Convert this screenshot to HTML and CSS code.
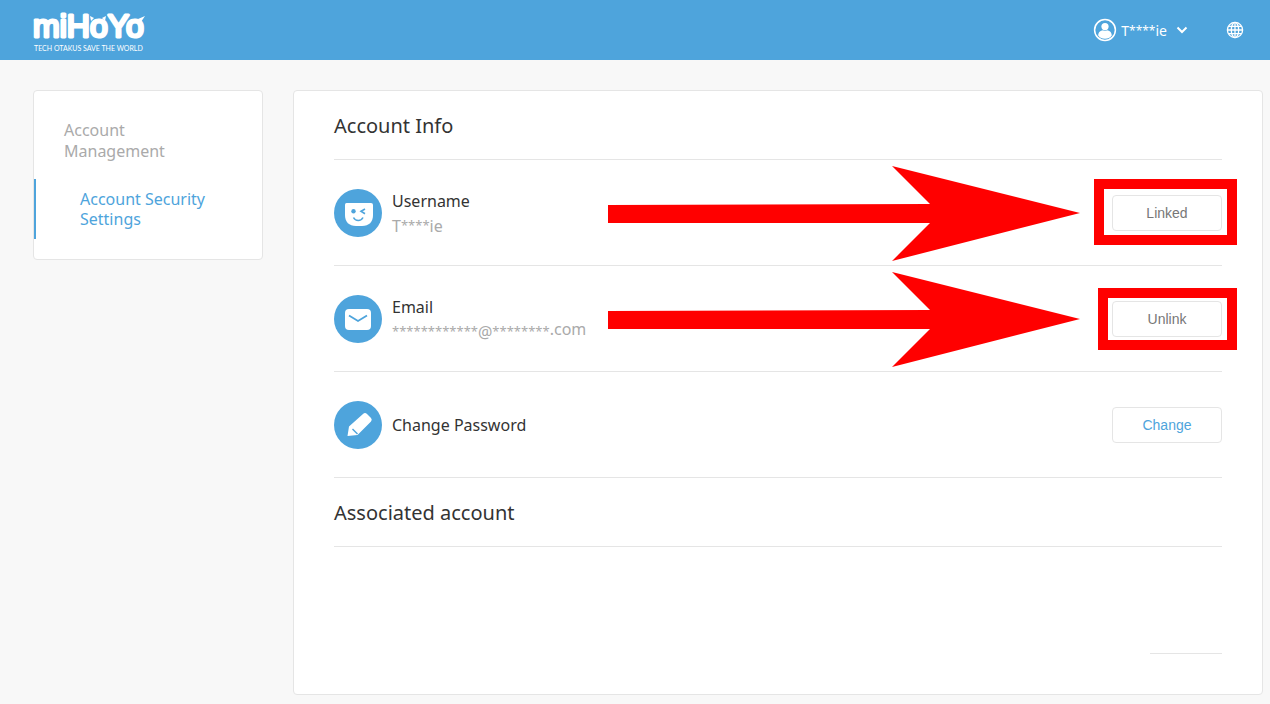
FILE: index.html
```html
<!DOCTYPE html>
<html lang="en">
<head>
  <meta charset="UTF-8" />
  <meta name="viewport" content="width=device-width, initial-scale=1.0"/>
  <title>miHoYo Account</title>
  <link rel="stylesheet" href="styles.css">
</head>
<body>
  <header class="header">
    <a class="logo" href="#">
      <svg width="120" height="46" viewBox="0 0 120 46" fill="#fff">
        <text class="logo-name" x="1" y="30">miHoYo</text>
        <path d="M58 9l4 2-3 3zM74 9l-4 2 3 3zM106 12l7-3-4 6z"/>
        <text class="logo-slogan" x="2" y="44">TECH OTAKUS SAVE THE WORLD</text>
      </svg>
    </a>
    <div class="header-right">
      <button class="user-menu" type="button">
        <svg width="24" height="24" viewBox="0 0 24 24" fill="#fff">
          <circle cx="12" cy="12" r="10.4" fill="none" stroke="#fff" stroke-width="1.5"/>
          <circle cx="12" cy="8.6" r="3.6"/>
          <path d="M5.2 17.5c0-3 2.2-5 4.8-5.2 1.200.7 2.800.7 4 0 2.600.2 4.800 2.200 4.800 5.200-1.600 2.200-4 3.300-6.800 3.300s-5.200-1.100-6.800-3.300z"/>
        </svg>
        <span>T<span class="stars">****</span>ie</span>
        <svg class="arrow-down" width="12" height="8" viewBox="0 0 12 8" fill="none" stroke="#fff" stroke-width="2">
          <path d="M1.500 1.500L6 6l4.500-4.500"/>
        </svg>
      </button>
      <button class="lang" type="button" aria-label="Language">
        <svg width="18" height="18" viewBox="0 0 18 18" fill="none" stroke="#fff" stroke-width="1.300">
          <circle cx="9" cy="9" r="7.600"/>
          <ellipse cx="9" cy="9" rx="3.700" ry="7.600"/>
          <path d="M9 1.400v15.200M1.400 9h15.200M2.500 5.300h13M2.500 12.700h13"/>
        </svg>
      </button>
    </div>
  </header>

  <div class="container">
    <nav class="sidebar">
      <div class="menu-title">Account Management</div>
      <a class="menu-item active" href="#">Account Security Settings</a>
    </nav>

    <main class="content">
      <h2 class="title">Account Info</h2>
      <ul class="list">
        <li class="row">
          <svg class="icon" width="48" height="48" viewBox="0 0 48 48">
            <circle cx="24" cy="24" r="24" fill="#4ea4dc"/>
            <path d="M12.500 14h24.500a2 2 0 0 1 2 2v10c0 7-4 11-11 11h-6c-7 0-11-4-11-11v-10.500a1.500 1.500 0 0 1 1.500-1.500z" fill="#fff"/>
            <circle cx="19.500" cy="22.300" r="2.200" fill="#4ea4dc"/>
            <path d="M31 20l-4 2.300 4 2.500M19.500 28.500c2 4 7.500 4 9.500 0" fill="none" stroke="#4ea4dc" stroke-width="1.600"/>
          </svg>
          <div class="info">
            <div class="name">Username</div>
            <div class="value">T<span class="stars">****</span>ie</div>
          </div>
          <svg class="arrow" width="472" height="95" viewBox="0 0 472 95" fill="#f00">
            <path d="M0 39L322 38 284 0 472 47 284 95 322 57H0z"/>
          </svg>
          <div class="action mark mark-linked"><button class="btn" type="button">Linked</button></div>
        </li>
        <li class="row">
          <svg class="icon" width="48" height="48" viewBox="0 0 48 48">
            <circle cx="24" cy="24" r="24" fill="#4ea4dc"/>
            <rect x="11" y="14" width="26" height="21" rx="4" fill="#fff"/>
            <path d="M15 20.500l9 5.500 9-5.500" fill="none" stroke="#4ea4dc" stroke-width="1.800"/>
          </svg>
          <div class="info">
            <div class="name">Email</div>
            <div class="value"><span class="stars">************</span>@<span class="stars">********</span><span class="domain">.com</span></div>
          </div>
          <svg class="arrow" width="472" height="95" viewBox="0 0 472 95" fill="#f00">
            <path d="M0 39L322 38 284 0 472 47 284 95 322 57H0z"/>
          </svg>
          <div class="action mark mark-unlink"><button class="btn" type="button">Unlink</button></div>
        </li>
        <li class="row">
          <svg class="icon" width="48" height="48" viewBox="0 0 48 48">
            <circle cx="24" cy="24" r="24" fill="#4ea4dc"/>
            <path d="M13.500 35l1.500-9.500 14-12.500q2-2 4 0l4 4q1.500 1.500 0 3.500L23.500 34z" fill="#fff"/>
            <path d="M18.500 28l5 5" stroke="#4ea4dc" stroke-width="1.400"/>
          </svg>
          <div class="info">
            <div class="name">Change Password</div>
          </div>
          <div class="action"><button class="btn btn-blue" type="button">Change</button></div>
        </li>
      </ul>
      <h2 class="title">Associated account</h2>
      <div class="short-line"></div>
    </main>
  </div>
</body>
</html>
```

FILE: styles.css
```css
* {
  box-sizing: border-box;
}
body {
  font-family: "Noto Sans", "Open Sans", sans-serif;
  font-size: 16px;
  margin: 0;
  background: #f8f8f8;
  color: #333;
}
button {
  cursor: pointer;
}
.header {
  display: flex;
  justify-content: space-between;
  align-items: center;
  height: 60px;
  padding: 0 26px 0 32px;
  background: #4ea4dc;
}
.logo svg {
  display: block;
}
.logo-name {
  font-family: "Liberation Sans", Arial, sans-serif;
  font-size: 32px;
  stroke: #fff;
  stroke-width: 3px;
  stroke-linejoin: round;
}
.logo-slogan {
  font-family: Lato, sans-serif;
  font-size: 7px;
}
.header-right {
  display: flex;
  align-items: center;
  gap: 38px;
}
.user-menu,
.lang {
  display: flex;
  align-items: center;
  padding: 0;
  border: none;
  background: none;
  color: #fff;
  font-family: inherit;
  font-size: 14px;
}
.user-menu {
  gap: 4px;
}
.user-menu .stars {
  font-size: 12px;
  vertical-align: 1px;
}
.arrow-down {
  margin-left: 5px;
}
.container {
  display: flex;
  align-items: flex-start;
  gap: 30px;
  padding: 30px 7px 9px 33px;
}
.sidebar {
  flex: 0 0 230px;
  padding: 29px 0 20px;
  background: #fff;
  border: 1px solid #e5e5e5;
  border-radius: 4px;
}
.menu-title {
  padding: 0 60px 17px 30px;
  line-height: 21px;
  color: #aaa;
}
.menu-item {
  display: block;
  padding: 10px 30px 10px 44px;
  line-height: 20px;
  color: #333;
  text-decoration: none;
}
.menu-item.active {
  border-left: 2px solid #4ea4dc;
  color: #4ea4dc;
}
.content {
  flex: 1;
  min-height: 605px;
  padding: 0 40px 40px;
  background: #fff;
  border: 1px solid #e5e5e5;
  border-radius: 4px;
}
.title {
  margin: 0;
  height: 69px;
  border-bottom: 1px solid #e5e5e5;
  font-size: 20px;
  font-weight: normal;
  line-height: 69px;
}
.list {
  list-style: none;
  margin: 0;
  padding: 0;
}
.row {
  position: relative;
  display: flex;
  align-items: center;
  height: 106px;
  border-bottom: 1px solid #e5e5e5;
}
.info {
  flex: 1;
  margin-left: 10px;
  padding-top: 2px;
  line-height: 25px;
}
.value {
  color: #aaa;
}
.stars {
  font-size: 13px;
  line-height: 1;
  vertical-align: 2px;
}
.domain {
  line-height: 1;
  vertical-align: 3px;
}
.btn {
  display: block;
  width: 110px;
  height: 36px;
  background: #fff;
  border: 1px solid #e5e5e5;
  border-radius: 4px;
  color: #777;
  font-family: "Liberation Sans", Arial, sans-serif;
  font-size: 14px;
}
.btn-blue {
  color: #4ea4dc;
}
/* red arrows and frames lie over the rows */
.arrow {
  position: absolute;
  right: 142px;
  top: 6px;
}
.mark {
  position: relative;
}
.mark::after {
  content: "";
  position: absolute;
  border: 10px solid #f00;
  pointer-events: none;
}
.mark-linked::after {
  inset: -16px -15px -14px -18px;
}
.mark-unlink::after {
  inset: -13px -15px -13px -14px;
}
.short-line {
  width: 72px;
  margin: 106px 0 0 auto;
  border-top: 1px solid #e5e5e5;
}
```
